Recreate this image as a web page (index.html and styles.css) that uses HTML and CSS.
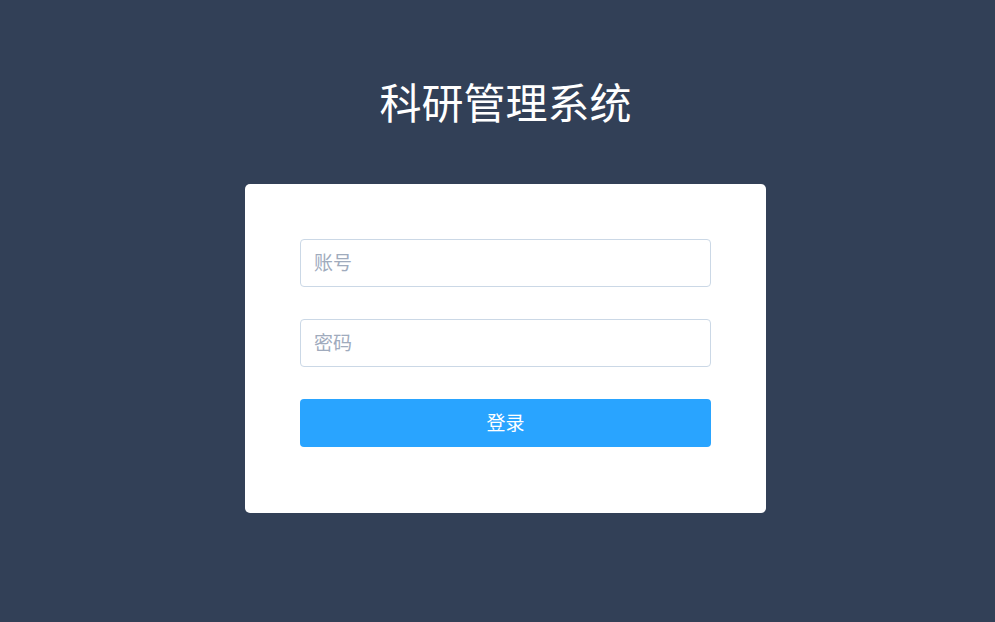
FILE: index.html
```html
<!DOCTYPE html>
<html lang="zh-CN">
<head>
<meta charset="utf-8">
<title>科研管理系统</title>
<link rel="stylesheet" href="styles.css">
</head>
<body>
<div class="page">
  <h1 class="title">科研管理系统</h1>
  <form class="card">
    <input class="field" type="text" placeholder="账号">
    <input class="field" type="password" placeholder="密码">
    <button class="btn" type="button">登录</button>
  </form>
</div>
</body>
</html>
```
FILE: styles.css
```css
html, body {
  margin: 0;
  padding: 0;
  height: 100%;
  background: #324057;
}
body {
  font-family: "Noto Sans CJK SC", "Liberation Sans", sans-serif;
}
.page {
  box-sizing: border-box;
  height: 100%;
  padding: 74px 0 0 16px;
  display: flex;
  flex-direction: column;
  align-items: center;
}
.title {
  margin: 0;
  color: #ffffff;
  font-size: 42px;
  font-weight: 400;
  line-height: 54px;
  height: 54px;
}
.card {
  box-sizing: border-box;
  margin-top: 56px;
  width: 521px;
  height: 329px;
  background: #ffffff;
  border-radius: 5px;
  padding: 55px 55px 0 55px;
  display: flex;
  flex-direction: column;
  gap: 32px;
}
.field {
  box-sizing: border-box;
  width: 411px;
  height: 48px;
  border: 1px solid #cbd8e6;
  border-radius: 4px;
  padding: 0 13px 3px 13px;
  font-family: inherit;
  font-size: 19px;
  color: #1f2d3d;
  outline: none;
  background: #fff;
}
.field::placeholder {
  color: #a0abbd;
}
.btn {
  box-sizing: border-box;
  width: 411px;
  height: 48px;
  border: none;
  border-radius: 4px;
  padding: 0 0 4px 0;
  background: #29a4ff;
  color: #ffffff;
  font-family: inherit;
  font-size: 19px;
  cursor: pointer;
}
```
